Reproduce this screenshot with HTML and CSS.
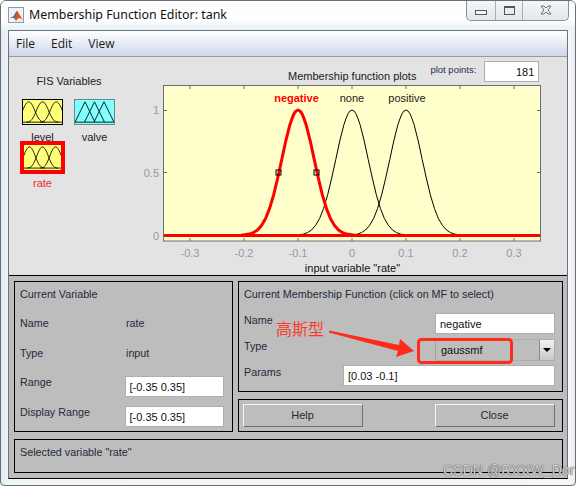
FILE: index.html
```html
<!DOCTYPE html>
<html lang="en">
<head>
<meta charset="utf-8">
<title>Membership Function Editor: tank</title>
<link rel="stylesheet" href="styles.css">
</head>
<body>
<div class="window">
  <header class="titlebar">
    <svg class="app-icon" viewBox="0 0 16 16"><rect x="0.500" y="0.500" width="15" height="15" fill="#eef1f5" stroke="#8f9aa6"/><path d="M2 11l3.500-1.500L9 3.500l2.500 4 3 5-3-1.500-2 1-1.500 2-2-3z" fill="#d9541e"/><path d="M2 11l3.500-1.500L9 3.500 7.500 9l-1 2.500-1.500-1z" fill="#2a6fb5"/></svg>
    <span class="title">Membership Function Editor: tank</span>
    <div class="controls">
      <span class="ctl ctl-min"><i></i></span>
      <span class="ctl ctl-max"><i></i></span>
      <span class="ctl ctl-close">
        <svg viewBox="0 0 12 10" width="12" height="10"><path d="M1 1h3l2 2 2-2h3L8 5l3 4H8L6 7 4 9H1l3-4z" fill="#eef1f4" stroke="#6a7076"/></svg>
      </span>
    </div>
  </header>

  <main class="client">
    <nav class="menubar"><span>File</span><span>Edit</span><span>View</span></nav>

    <section class="top">
      <div class="vars">
        <div class="vars-title">FIS Variables</div>
        <div class="vars-grid">
          <div class="var">
            <svg class="mf mf-input" viewBox="0 0 41 26" preserveAspectRatio="none"><use href="#gauss3"/></svg>
            <span class="var-label">level</span>
          </div>
          <div class="var">
            <svg class="mf mf-output" viewBox="0 0 41 26" preserveAspectRatio="none"><path d="M0 24L10.500 2 21 24M10 24L20.500 2 31 24M20 24L30.500 2 41 24M0 24H41" fill="none" stroke="#111" stroke-width="1"/></svg>
            <span class="var-label">valve</span>
          </div>
          <div class="var var-selected">
            <svg class="mf mf-selected" viewBox="0 0 41 26" preserveAspectRatio="none"><use href="#gauss3"/></svg>
            <span class="var-label">rate</span>
          </div>
        </div>
        <svg class="defs" width="0" height="0"><defs>
          <g id="gauss3" fill="none" stroke="#111" stroke-width="1">
            <path d="M-11 24C-6 24-4 20-1 13 2 5 4 2 6 2 8 2 10 5 13 13 16 20 18 24 23 24"/>
            <path d="M3.500 24C8.500 24 10.500 20 13.500 13 16.500 5 18.500 2 20.500 2 22.500 2 24.500 5 27.500 13 30.500 20 32.500 24 37.500 24"/>
            <path d="M18 24C23 24 25 20 28 13 31 5 33 2 35 2 37 2 39 5 42 13 45 20 47 24 52 24"/>
            <path d="M0 24H41"/>
          </g>
        </defs></svg>
      </div>

      <div class="plot-col">
        <div class="plot-head">
          <span class="plot-title">Membership function plots</span>
          <span class="pp-label"><span class="pp-inner">plot points:</span></span>
          <span class="field pp-field">181</span>
        </div>
        <svg class="plot" viewBox="130 84 437 191" width="437" height="191">
          <defs>
            <path id="gauss" d="M-65 0L-56.700 -0.300L-48.600 -1.400L-44.500 -2.900L-40.500 -5.500L-36.500 -10L-32.400 -17L-28.400 -27.100L-24.300 -40.800L-20.300 -57.500L-16.200 -76.100L-12.200 -94.700L-8.100 -110.800L-6.100 -116.600L-4.100 -121.600L-2 -124.500L0 -125.500L2 -124.500L4.100 -121.600L6.100 -116.600L8.100 -110.800L12.200 -94.700L16.200 -76.100L20.300 -57.500L24.300 -40.800L28.400 -27.100L32.400 -17L36.500 -10L40.500 -5.500L44.500 -2.900L48.600 -1.400L56.700 -0.300L65 0"/>
          </defs>
          <rect class="axes" x="163.500" y="85.500" width="377" height="155.500"/>
          <path class="ticks" d="M190 86v3M244 86v3M298 86v3M352 86v3M406 86v3M460 86v3M514 86v3M190 241v-3M244 241v-3M298 241v-3M352 241v-3M406 241v-3M460 241v-3M514 241v-3M164 110.500h3M164 172.500h3M164 235.500h3M540 110.500h-3M540 172.500h-3M540 235.500h-3"/>
          <g class="mfline">
            <path d="M164 235.500H540"/>
            <use href="#gauss" x="352" y="235.500"/>
            <use href="#gauss" x="406" y="235.500"/>
          </g>
          <g class="mfline-sel">
            <path d="M164 235.500H540"/>
            <use href="#gauss" x="298" y="235.500"/>
          </g>
          <rect class="handle" x="276" y="170" width="5" height="5"/>
          <rect class="handle" x="314" y="170" width="5" height="5"/>
          <text class="mf-name mf-name-sel" x="296.500" y="102">negative</text>
          <text class="mf-name" x="352" y="102">none</text>
          <text class="mf-name" x="407" y="102">positive</text>
          <text class="ytick" x="159" y="114">1</text>
          <text class="ytick" x="159" y="177">0.5</text>
          <text class="ytick" x="159" y="240">0</text>
          <text class="xtick" x="190" y="257">-0.3</text>
          <text class="xtick" x="244" y="257">-0.2</text>
          <text class="xtick" x="298" y="257">-0.1</text>
          <text class="xtick" x="352" y="257">0</text>
          <text class="xtick" x="406" y="257">0.1</text>
          <text class="xtick" x="460" y="257">0.2</text>
          <text class="xtick" x="514" y="257">0.3</text>
          <text class="xlabel" x="352.500" y="272">input variable "rate"</text>
        </svg>
      </div>
    </section>

    <section class="bottom">
      <div class="panel p-var">
        <div class="p-head">Current Variable</div>
        <div class="row"><span class="lab">Name</span><span class="val">rate</span></div>
        <div class="row"><span class="lab">Type</span><span class="val">input</span></div>
        <div class="row"><span class="lab">Range</span><span class="field range">[-0.35 0.35]</span></div>
        <div class="row"><span class="lab">Display Range</span><span class="field range">[-0.35 0.35]</span></div>
      </div>
      <div class="right-col">
        <div class="panel p-mf">
          <div class="p-head">Current Membership Function (click on MF to select)</div>
          <div class="mf-rows">
            <div class="mf-row"><span class="lab">Name</span><span class="field mf-field">negative</span></div>
            <div class="mf-row"><span class="lab">Type</span>
              <span class="popup"><span class="popup-text">gaussmf</span><span class="popup-btn"><i></i></span></span>
            </div>
            <div class="mf-row"><span class="lab">Params</span><span class="field params">[0.03 -0.1]</span></div>
          </div>
        </div>
        <div class="panel p-btn">
          <button class="btn" type="button">Help</button>
          <button class="btn" type="button">Close</button>
        </div>
      </div>
      <div class="panel p-status">Selected variable "rate"</div>
    </section>
  </main>

  <svg class="notes" viewBox="0 0 576 486" width="576" height="486">
    <rect class="note-box" x="418.500" y="339.500" width="93" height="23" rx="3"/>
    <polygon class="note-arrow" points="329,330.500 399,345 400,339 414,351 396,357 398,351 329,332.500"/>
  </svg>
  <span class="note-text">高斯型</span>
  <span class="watermark">CSDN @RXXW_Dor</span>
</div>
</body>
</html>
```

FILE: styles.css
```css
* { box-sizing: border-box; }
html, body { margin: 0; padding: 0; }
body { width: 576px; height: 486px; overflow: hidden; background: #fff; }

.window {
  position: relative;
  width: 576px;
  height: 486px;
  overflow: hidden;
  font-family: "Liberation Sans", Arial, sans-serif;
  font-size: 10.750px;
  color: #1a1a1a;
  background: linear-gradient(90deg, #dfeaf0 0, #f0f5f8 8px, #f4f6f8 568px, #e4e9ee 576px);
  border: 1px solid #6b6f73;
  border-radius: 6px 6px 4px 4px;
}

.titlebar {
  display: flex;
  align-items: center;
  height: 29px;
  padding: 0 0 2px 7px;
  background: linear-gradient(#fdfdfe 0, #fff 18px, #e6f0f6 29px);
}
.app-icon { width: 16px; height: 16px; flex: none; }
.title {
  margin-left: 5px;
  font-family: "Noto Sans", "Open Sans", sans-serif;
  font-size: 12.400px;
  color: #111;
}
.controls {
  display: flex;
  margin-left: auto;
  margin-right: 6px;
  margin-top: -8px;
  height: 20px;
  border: 1px solid #8b9096;
  border-top: 0;
  border-radius: 0 0 5px 5px;
  background: linear-gradient(#f4f6f8, #e3e7ec);
}
.ctl { display: flex; align-items: center; justify-content: center; height: 100%; }
.ctl + .ctl { border-left: 1px solid #a9aeb3; }
.ctl-min { width: 28px; }
.ctl-max { width: 27px; }
.ctl-close { width: 46px; }
.ctl-min i { display: block; width: 12px; height: 5px; margin-top: 5px; border: 1px solid #555; background: #f4f6f8; }
.ctl-max i { display: block; width: 11px; height: 9px; border: 1px solid #555; border-top-width: 2px; background: #e8ecef; }

.client {
  display: flex;
  flex-direction: column;
  width: 560px;
  height: 449px;
  margin-left: 7px;
  border: 1px solid #6e7276;
  border-bottom-color: #000;
  background: #e3e3e3;
}
.menubar {
  display: flex;
  gap: 16px;
  align-items: center;
  height: 26px;
  padding-left: 7px;
  flex: none;
  font-family: "Open Sans", "Noto Sans", sans-serif;
  font-size: 12px;
  color: #1a1a1a;
  background: linear-gradient(#ffffff 0, #eff2f8 8px, #cdd5ea 26px);
  border-bottom: 1px solid #9a9a9a;
}

.top {
  display: flex;
  flex: none;
  height: 218px;
  background: #e3e3e3;
}
.vars { width: 121px; flex: none; padding-left: 13px; }
.vars-title { width: 94px; margin-top: 17px; text-align: center; line-height: 14px; font-size: 11px; }
.defs { position: absolute; }
.vars-grid {
  display: grid;
  grid-template-columns: 52px 52px;
  grid-template-rows: 42px auto;
  margin-top: 11px;
}
.var { display: flex; flex-direction: column; align-items: center; width: 41px; }
.var-label { line-height: 14px; margin-top: 5px; color: #222; font-size: 11px; }
.mf { display: block; flex: none; width: 41px; height: 26px; border: 1px solid #000; overflow: hidden; }
.mf-input { background: #ffff78; border-width: 1.500px; }
.mf-output { background: #7fffff; border-color: #66898c; }
.var-selected { grid-column: 1; width: 45px; margin-left: -2px; }
.mf-selected { width: 45px; height: 33px; background: #ffff78; border: 4px solid #f00; }
.var-selected .var-label { color: #f02c2c; margin-top: 2px; }

.plot-col { display: flex; flex-direction: column; width: 437px; flex: none; }
.plot-head { display: flex; height: 27px; flex: none; }
.plot-title { margin-left: 158px; margin-top: 12px; line-height: 14px; font-size: 11px; white-space: nowrap; }
.pp-label { margin-left: 14px; margin-top: 9px; height: 10px; overflow: hidden; font-size: 9.500px; color: #2a2a55; white-space: nowrap; }
.pp-inner { display: block; margin-top: -3px; line-height: 14px; }
.pp-field { width: 55px; height: 21px; margin-left: 8px; margin-top: 4px; text-align: right; font-size: 11px; }
.plot { display: block; flex: none; }
.axes { fill: #ffffcc; stroke: #6e6e6e; stroke-width: 1; }
.ticks { fill: none; stroke: #6e6e6e; stroke-width: 1; }
.mfline, .mfline use { fill: none; stroke: #000; stroke-width: 1; stroke-linejoin: round; }
.mfline-sel, .mfline-sel use { fill: none; stroke: #f00; stroke-width: 3; stroke-linejoin: round; stroke-linecap: butt; }
.handle { fill: none; stroke: #000; stroke-width: 1; }
.plot text { font-family: "Liberation Sans", Arial, sans-serif; font-size: 11px; }
.mf-name { text-anchor: middle; fill: #222; }
.mf-name-sel { fill: #f00; font-weight: 700; }
.ytick { text-anchor: end; fill: #999; }
.xtick { text-anchor: middle; fill: #999; }
.xlabel { text-anchor: middle; fill: #111; }

.bottom {
  display: grid;
  grid-template-columns: 219px 325px;
  grid-template-rows: 151px 34px;
  column-gap: 5px;
  row-gap: 7px;
  flex: 1;
  padding: 5px 0 0 5px;
  background: #bdbdbd;
  border-top: 1px solid #000;
}
.panel { border: 1px solid #000; }
.p-var { padding: 0 7px 0 5px; }
.p-head { height: 24px; line-height: 24px; color: #1f2a3a; }
.p-var .row { display: flex; align-items: center; height: 29.750px; }
.p-var .p-head + .row { margin-top: 2px; }
.lab { display: block; width: 106px; flex: none; color: #1f2a3a; }
.val { color: #1f2a3a; }
.field {
  display: block;
  height: 21px;
  line-height: 20px;
  padding: 0 4px;
  background: #fff;
  border: 1px solid #aeaeae;
  color: #111;
  white-space: nowrap;
}
.range { width: 99px; margin-top: 8px; margin-left: -1px; padding-left: 3.500px; font-size: 11px; }

.right-col { display: flex; flex-direction: column; gap: 7px; grid-row: 1; grid-column: 2; }
.p-mf { height: 111px; padding: 0 7px 0 5px; }
.mf-rows { display: flex; flex-direction: column; gap: 5px; margin-top: 7px; }
.mf-row { display: flex; align-items: center; justify-content: space-between; height: 21px; }
.mf-row .lab { width: auto; margin-bottom: 8px; }
.mf-field { width: 120px; font-size: 11px; }
.params { width: 212px; font-size: 11px; }
.popup { display: flex; width: 120px; height: 22px; background: #bdbdbd; border: 1px solid #aeaeae; border-left-color: #9f9f9f; font-size: 11px; }
.popup-text { flex: 1; padding-left: 5px; line-height: 20px; color: #111; }
.popup-btn { display: flex; align-items: center; justify-content: center; width: 15px; background: linear-gradient(#f2f2f2, #c8c8c8); border-left: 1px solid #8c8c8c; }
.popup-btn i { display: block; width: 0; height: 0; border: 4px solid transparent; border-top: 4px solid #000; border-bottom: 0; }
.p-btn { display: flex; justify-content: space-between; align-items: center; height: 33px; padding: 0 7px 0 4px; }
.btn {
  width: 120px;
  height: 23px;
  padding: 0 1px 1px 0;
  font: inherit;
  font-size: 11px;
  color: #1f2a3a;
  background: #bdbdbd;
  border-style: solid;
  border-color: #f5f5f5 #6e6e6e #6e6e6e #f5f5f5;
  border-width: 1.500px;
}
.p-status { grid-column: 1 / 3; padding: 0 5px; line-height: 25px; color: #1f2a3a; }

.notes { position: absolute; left: -1px; top: -1px; pointer-events: none; }
.note-box { fill: none; stroke: #ff2a1a; stroke-width: 3; }
.note-arrow { fill: #ff2a1a; }
.note-text {
  position: absolute;
  left: 275px;
  top: 317px;
  font-family: "Noto Sans CJK SC", sans-serif;
  font-size: 16px;
  line-height: 20px;
  color: #ff3a2a;
}
.watermark {
  position: absolute;
  left: 442px;
  top: 461px;
  font-family: "Liberation Sans", Arial, sans-serif;
  font-size: 14px;
  line-height: 16px;
  color: #d4d4d4;
  text-shadow: 0 0 1px #444, 0 0 1px #666;
  letter-spacing: 0.100px;
}
```
